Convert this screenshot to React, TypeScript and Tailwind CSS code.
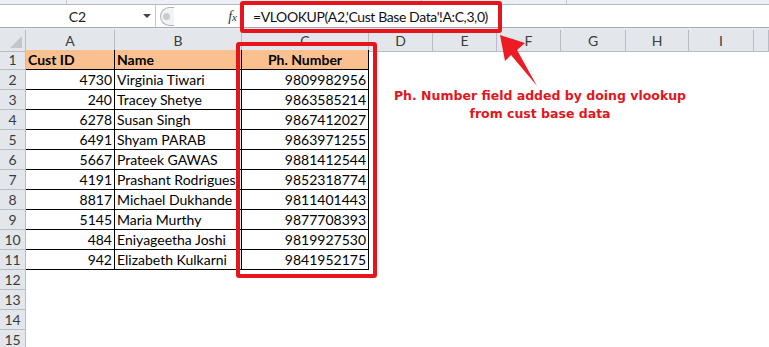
import React from "react";

const cols = ["A", "B", "C", "D", "E", "F", "G", "H", "I", ""];

const rows: [string, string, string][] = [
  ["4730", "Virginia Tiwari", "9809982956"],
  ["240", "Tracey Shetye", "9863585214"],
  ["6278", "Susan Singh", "9867412027"],
  ["6491", "Shyam PARAB", "9863971255"],
  ["5667", "Prateek GAWAS", "9881412544"],
  ["4191", "Prashant Rodrigues", "9852318774"],
  ["8817", "Michael Dukhande", "9811401443"],
  ["5145", "Maria Murthy", "9877708393"],
  ["484", "Eniyageetha Joshi", "9819927530"],
  ["942", "Elizabeth Kulkarni", "9841952175"],
];

const gridCols =
  "grid grid-cols-[26px_89px_127px_127px_64px_64px_64px_65px_63px_65px_15px]";

function RowHead({ n }: { n: number }) {
  return (
    <div className="flex h-[20px] items-center justify-center border-b border-r border-[#b9bdc3] bg-[#e3e7ec] text-[14px] text-[#3c3c3c]">
      {n}
    </div>
  );
}

export default function App() {
  return (
    <div className="relative h-[347px] w-[769px] overflow-hidden bg-white font-['Lato',sans-serif] text-[14px] text-black">
      {/* ribbon remnant */}
      <div className="flex h-[5px] border-b border-[#b4b8be] bg-[#eceff3]">
        <div className="w-[67px] border-r border-[#c4c8ce]" />
        <div className="w-[355px] border-r border-[#c4c8ce]" />
        <div className="w-[145px] border-r border-[#c4c8ce]" />
      </div>

      {/* formula bar */}
      <div className="flex h-[23px] border-b border-[#a9adb3] bg-white">
        <div className="relative flex w-[156px] items-center justify-center border-r border-[#c4c8ce]">
          <span className="text-[14px] text-[#222]">C2</span>
          <span className="absolute right-[4px] top-[9px] h-0 w-0 border-x-[4px] border-t-[4px] border-x-transparent border-t-[#444]" />
        </div>
        <div className="flex w-[84px] items-center">
          <div className="ml-[4px] flex h-[19px] w-[14px] items-center rounded-l-full border border-r-0 border-[#b0b4ba] bg-[#f2f3f5] pl-[2px]">
            <span className="h-[7px] w-[7px] rounded-full bg-[#c9ccd1]" />
          </div>
          <span className="ml-auto mr-[3px] font-['Liberation_Serif',serif] text-[14px] italic text-[#333]">
            f<span className="text-[11px]">x</span>
          </span>
        </div>
        <div className="flex flex-1 items-center border-l border-[#c4c8ce] pl-[12px] text-[14px] tracking-[-0.4px] text-[#111]">
          =VLOOKUP(A2,'Cust Base Data'!A:C,3,0)
        </div>
      </div>
      <div className="h-[2px] bg-[#e6e9ed]" />

      {/* column headers */}
      <div className={`${gridCols} h-[20px]`}>
        <div className="relative border-b border-r border-[#b9bdc3] bg-[#e3e7ec]">
          <span className="absolute bottom-[3px] right-[3px] h-0 w-0 border-b-[12px] border-l-[12px] border-b-[#c3c7cd] border-l-transparent" />
        </div>
        {cols.map((c, i) => (
          <div
            key={i}
            className="flex items-center justify-center border-b border-r border-[#b9bdc3] bg-[#e3e7ec] text-[14px] text-[#3c3c3c]"
          >
            {c}
          </div>
        ))}
      </div>

      {/* header row */}
      <div className={gridCols}>
        <RowHead n={1} />
        <div className="flex h-[20px] items-center border-b border-r border-black bg-[#fac08f] px-[2px] font-bold">
          Cust ID
        </div>
        <div className="flex h-[20px] items-center border-b border-r border-black bg-[#fac08f] px-[2px] font-bold">
          Name
        </div>
        <div className="flex h-[20px] items-center justify-center border-b border-r border-black bg-[#fac08f] px-[2px] font-bold">
          Ph. Number
        </div>
        <div className="col-span-7" />
      </div>

      {rows.map((r, i) => (
        <div key={i} className={gridCols}>
          <RowHead n={i + 2} />
          <div className="flex h-[20px] items-center justify-end border-b border-r border-black px-[2px]">
            {r[0]}
          </div>
          <div className="flex h-[20px] items-center overflow-visible whitespace-nowrap border-b border-r border-black px-[2px]">
            {r[1]}
          </div>
          <div className="flex h-[20px] items-center justify-end border-b border-r border-black px-[2px]">
            {r[2]}
          </div>
          <div className="col-span-7" />
        </div>
      ))}

      {[12, 13, 14, 15].map((n) => (
        <div key={n} className={gridCols}>
          <RowHead n={n} />
          <div className="col-span-10" />
        </div>
      ))}

      {/* red highlight boxes */}
      <div className="absolute left-[240px] top-[1px] h-[32px] w-[262px] rounded-[3px] border-[4px] border-[#e8141c]" />
      <div className="absolute left-[236px] top-[42px] h-[236px] w-[141px] rounded-[3px] border-[4px] border-[#e8141c]" />

      {/* arrow */}
      <svg className="absolute left-0 top-0" width="769" height="347">
        <polygon
          points="500,35 525,43 517,50 537,86 511,55 505,61"
          fill="#ec1c24"
        />
      </svg>

      {/* annotation */}
      <div className="absolute left-[370px] top-[87px] w-[340px] text-center font-['DejaVu_Sans',sans-serif] text-[12.5px] font-bold leading-[18px] text-[#e3161d]">
        Ph. Number field added by doing vlookup
        <br />
        from cust base data
      </div>
    </div>
  );
}
